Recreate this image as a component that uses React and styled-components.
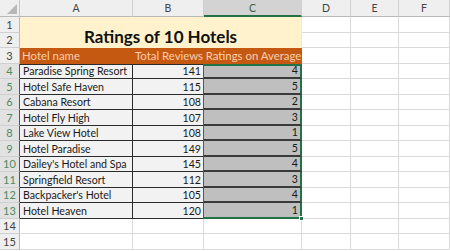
import React from 'react'
import styled, { createGlobalStyle, css } from 'styled-components'

const GlobalStyle = createGlobalStyle`
  html, body {
    margin: 0;
    padding: 0;
    background: #ffffff;
  }
  body {
    font-family: Lato, 'Liberation Sans', sans-serif;
  }
`

const green = '#217346'

const Sheet = styled.div`
  display: grid;
  grid-template-columns: 20px 113px 71px 98px 49px 48px 51px;
  grid-template-rows: 17px repeat(15, 15.5px);
  width: 450px;
  height: 251px;
  overflow: hidden;
  background: #fff;
  font-size: 10.6px;
  color: #1a1a1a;
`

const Corner = styled.div`
  position: relative;
  background: #efefef;
  border-right: 1px solid #c6c6c6;
  border-bottom: 1px solid #b9b9b9;
  box-sizing: border-box;

  &:after {
    content: '';
    position: absolute;
    right: 2px;
    bottom: 2px;
    width: 0;
    height: 0;
    border-left: 10px solid transparent;
    border-bottom: 10px solid #b8b8b8;
  }
`

const ColHead = styled.div`
  display: flex;
  align-items: center;
  justify-content: center;
  box-sizing: border-box;
  background: ${p => (p.$active ? '#d3d3d3' : '#efefef')};
  color: ${p => (p.$active ? '#3d5b48' : '#444')};
  border-right: 1px solid #d0d0d0;
  border-bottom: ${p => (p.$active ? `2px solid ${green}` : '1px solid #b9b9b9')};
  font-size: 10.5px;
`

const RowHead = styled.div`
  display: flex;
  align-items: center;
  justify-content: center;
  box-sizing: border-box;
  background: ${p => (p.$active ? '#e2e2e2' : '#efefef')};
  color: ${p => (p.$active ? '#4e8a62' : '#444')};
  border-bottom: 1px solid #d0d0d0;
  border-right: ${p => (p.$active ? `1px solid ${green}` : '1px solid #b9b9b9')};
  font-size: 11px;
`

const Blank = styled.div`
  box-sizing: border-box;
  border-right: 1px solid #dadada;
  border-bottom: 1px solid #dadada;
`

const Title = styled.div`
  grid-column: 2 / span 3;
  grid-row: 2 / span 2;
  display: flex;
  align-items: flex-end;
  justify-content: center;
  box-sizing: border-box;
  padding-bottom: 1px;
  background: #fff2cc;
  border-right: 1px solid #fce8bd;
  font-size: 17px;
  font-weight: 700;
  color: #111;
  line-height: 20px;
`

const HeadCell = styled.div`
  display: flex;
  align-items: flex-end;
  justify-content: ${p => (p.$left ? 'flex-start' : 'center')};
  box-sizing: border-box;
  padding: 0 1px 1px 2px;
  background: #c65911;
  color: #f9cfb0;
  font-size: 11.4px;
  line-height: 14px;
  white-space: nowrap;
  overflow: hidden;
`

const DataCell = styled.div`
  display: flex;
  align-items: flex-end;
  justify-content: ${p => (p.$num ? 'flex-end' : 'flex-start')};
  box-sizing: border-box;
  padding: 0 2px 0 3px;
  line-height: 14px;
  white-space: nowrap;
  overflow: hidden;
  background: #f2f2f2;
  border-bottom: 1px solid #2b2b2b;
  border-right: 1px solid #2b2b2b;
  ${p => p.$top && css`border-top: 1px solid #2b2b2b;`}
`

const RatingCell = styled(DataCell)`
  position: relative;
  overflow: visible;
  background: #bfbfbf;
  border-left: 1px solid ${green};
  border-right: 2px solid ${green};
  border-bottom: ${p => (p.$last ? `2px solid ${green}` : '2px solid #3a3a3a')};
  ${p => p.$top && css`border-top: 2px solid ${green};`}
  margin-left: -1px;

  ${p =>
    p.$last &&
    css`
      &:after {
        content: '';
        position: absolute;
        right: -4px;
        bottom: -4px;
        width: 5px;
        height: 5px;
        background: ${green};
        border: 1px solid #fff;
        box-sizing: border-box;
      }
    `}
`

const hotels = [
  ['Paradise Spring Resort', 141, 4],
  ['Hotel Safe Haven', 115, 5],
  ['Cabana Resort', 108, 2],
  ['Hotel Fly High', 107, 3],
  ['Lake View Hotel', 108, 1],
  ['Hotel Paradise', 149, 5],
  ["Dailey's Hotel and Spa", 145, 4],
  ['Springfield Resort', 112, 3],
  ["Backpacker's Hotel", 105, 4],
  ['Hotel Heaven', 120, 1],
]

const columns = ['A', 'B', 'C', 'D', 'E', 'F']

function App() {
  return (
    <>
      <GlobalStyle />
      <Sheet>
        <Corner />
        {columns.map(c => (
          <ColHead key={c} $active={c === 'C'}>{c}</ColHead>
        ))}

        <RowHead>1</RowHead>
        <Title>Ratings of 10 Hotels</Title>
        <Blank /><Blank /><Blank />

        <RowHead>2</RowHead>
        <Blank /><Blank /><Blank />

        <RowHead>3</RowHead>
        <HeadCell $left>Hotel name</HeadCell>
        <HeadCell>Total Reviews</HeadCell>
        <HeadCell>Ratings on Average</HeadCell>
        <Blank /><Blank /><Blank />

        {hotels.map(([name, reviews, rating], i) => (
          <React.Fragment key={name}>
            <RowHead $active>{i + 4}</RowHead>
            <DataCell $top={i === 0}>{name}</DataCell>
            <DataCell $num $top={i === 0}>{reviews}</DataCell>
            <RatingCell $num $top={i === 0} $last={i === hotels.length - 1}>
              {rating}
            </RatingCell>
            <Blank /><Blank /><Blank />
          </React.Fragment>
        ))}

        {[14, 15].map(n => (
          <React.Fragment key={n}>
            <RowHead>{n}</RowHead>
            <Blank /><Blank /><Blank /><Blank /><Blank /><Blank />
          </React.Fragment>
        ))}
      </Sheet>
    </>
  )
}

export default App
